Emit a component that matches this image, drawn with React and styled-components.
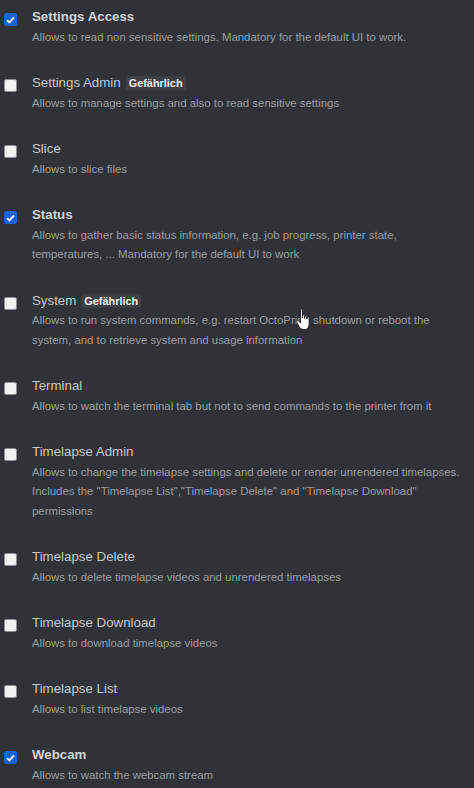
import React from 'react'
import styled, { createGlobalStyle } from 'styled-components'

const GlobalStyle = createGlobalStyle`
  html, body {
    margin: 0;
    padding: 0;
    background: #303237;
  }
  body {
    font-family: "Liberation Sans", Arial, sans-serif;
  }
`

const permissions = [
  { name: 'Settings Access', checked: true, desc: 'Allows to read non sensitive settings. Mandatory for the default UI to work.' },
  { name: 'Settings Admin', dangerous: true, desc: 'Allows to manage settings and also to read sensitive settings' },
  { name: 'Slice', desc: 'Allows to slice files' },
  { name: 'Status', checked: true, desc: 'Allows to gather basic status information, e.g. job progress, printer state, temperatures, ... Mandatory for the default UI to work' },
  { name: 'System', dangerous: true, desc: 'Allows to run system commands, e.g. restart OctoPrint, shutdown or reboot the system, and to retrieve system and usage information' },
  { name: 'Terminal', desc: 'Allows to watch the terminal tab but not to send commands to the printer from it' },
  { name: 'Timelapse Admin', desc: 'Allows to change the timelapse settings and delete or render unrendered timelapses. Includes the "Timelapse List","Timelapse Delete" and "Timelapse Download" permissions' },
  { name: 'Timelapse Delete', desc: 'Allows to delete timelapse videos and unrendered timelapses' },
  { name: 'Timelapse Download', desc: 'Allows to download timelapse videos' },
  { name: 'Timelapse List', desc: 'Allows to list timelapse videos' },
  { name: 'Webcam', checked: true, desc: 'Allows to watch the webcam stream' },
]

const App = () => {
  return <Page>
    <GlobalStyle />
    <List>
      {permissions.map((perm, index) => (
        <Item key={index}>
          <Box $checked={perm.checked}>
            {perm.checked ? <svg width='9' height='8' viewBox='0 0 9 8'>
              <path d='M1 4.2 L3.4 6.5 L8 1.3' fill='none' stroke='#fff' strokeWidth='1.8' />
            </svg> : null}
          </Box>
          <Text>
            <Title $checked={perm.checked}>
              {perm.name}
              {perm.dangerous ? <Badge>Gefährlich</Badge> : null}
            </Title>
            <Desc>{perm.desc}</Desc>
          </Text>
        </Item>
      ))}
    </List>
    {/* mouse cursor over the System row */}
    <Cursor width='15' height='22' viewBox='0 0 13.6 20'>
      <path
        d='M5 1.5 C5 0.7 6.8 0.7 6.8 1.5 L6.8 9 L7 6.8 C7 6 8.8 6 8.8 6.8 L8.8 9.5 L9 7.6 C9 6.9 10.8 6.9 10.8 7.7 L10.8 10 L11 8.6 C11 7.9 12.8 7.9 12.8 8.7 L12.8 14 C12.8 17 11.5 19.5 9 19.5 L7.5 19.5 C5.5 19.5 4.5 18.2 3.4 16.4 L1.2 12.4 C0.7 11.5 1.8 10.6 2.7 11.4 L5 13.6 Z'
        fill='#fff'
        stroke='#222'
        strokeWidth='0.9'
        strokeLinejoin='round'
      />
    </Cursor>
  </Page>
}

const Page = styled.div`
  position: relative;
  width: 474px;
  min-height: 788px;
  padding: 7px 6px 0 4px;
  box-sizing: border-box;
`

const List = styled.div`
  display: flex;
  flex-direction: column;
  gap: 26px;
`

const Item = styled.div`
  display: grid;
  grid-template-columns: 13px 1fr;
  column-gap: 15px;
  align-items: start;
`

const Box = styled.span`
  width: 13px;
  height: 13px;
  margin-top: 6px;
  box-sizing: border-box;
  border-radius: 2px;
  display: flex;
  align-items: center;
  justify-content: center;
  background: ${p => p.$checked ? '#1a62d6' : '#f2f2f2'};
  border: 1px solid ${p => p.$checked ? '#1a62d6' : '#8d8e91'};
`

const Text = styled.div`
  display: flex;
  flex-direction: column;
`

const Title = styled.div`
  font-size: 13.3px;
  line-height: 20.5px;
  font-weight: ${p => p.$checked ? 700 : 400};
  color: ${p => p.$checked ? '#d3d4d6' : '#c6c7c9'};
  display: flex;
  align-items: center;
  gap: 5px;
`

const Badge = styled.span`
  display: inline-block;
  font-size: 10.9px;
  font-weight: 700;
  line-height: 14px;
  padding: 0 3px;
  border-radius: 2px;
  background: #3d3f44;
  color: #f2f2f2;
`

const Desc = styled.div`
  font-size: 11.4px;
  line-height: 19.5px;
  color: #9c9da0;
`

const Cursor = styled.svg`
  position: absolute;
  left: 295px;
  top: 308px;
`

export default App
